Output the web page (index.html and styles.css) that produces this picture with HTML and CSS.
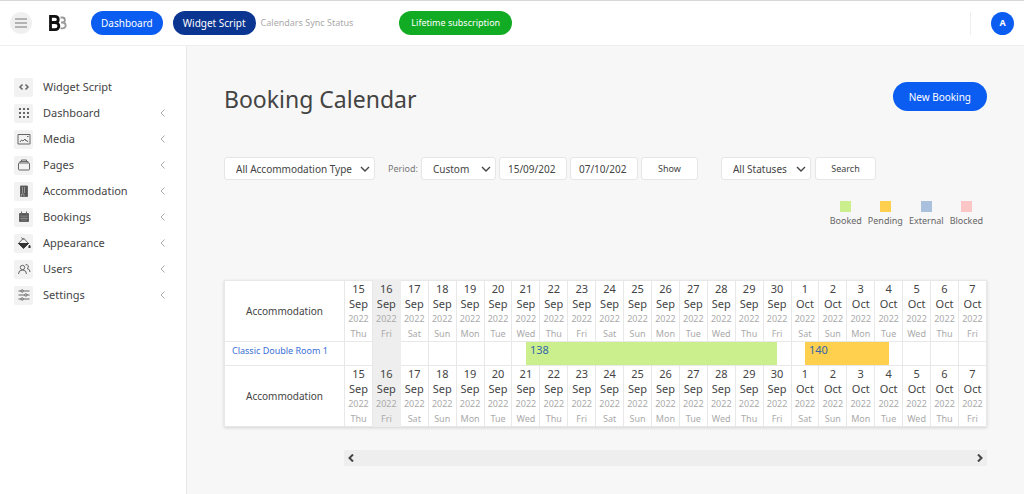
FILE: index.html
```html
<!DOCTYPE html>
<html lang="en">
<head>
<meta charset="utf-8">
<meta name="viewport" content="width=device-width, initial-scale=1">
<title>Booking Calendar</title>
<link rel="stylesheet" href="styles.css">
</head>
<body>
<header class="topbar">
  <button class="menu-toggle" type="button" aria-label="Toggle menu">
    <svg width="12" height="10" viewBox="0 0 12 10"><path d="M0 1h12M0 5h12M0 9h12" stroke="#777" stroke-width="1"/></svg>
  </button>
  <a class="logo" href="#" aria-label="Home">
    <svg width="20" height="18" viewBox="0 0 20 18" fill="none">
      <path d="M12.500 3.500h1.700c3.600 0 3.600 5 0 5H13h1.500c4.200 0 4.200 5.800 0 5.800h-2" stroke="#999" stroke-width="1.800"/>
      <path d="M2.500 2.300h4.300c4.600 0 4.600 6.200 0 6.200H2.500h4.600c5 0 5 7.200 0 7.200H2.500z" stroke="#111" stroke-width="2.800"/>
    </svg>
  </a>
  <nav class="top-links">
    <a class="pill" href="#">Dashboard</a>
    <a class="pill pill-navy" href="#">Widget Script</a>
    <a class="sync-link" href="#">Calendars Sync Status</a>
    <a class="pill pill-green" href="#">Lifetime subscription</a>
  </nav>
  <div class="account"><button class="avatar" type="button">A</button></div>
</header>
<div class="layout">
  <nav class="sidebar">
    <ul class="menu">
      <li><a class="menu-item" href="#"><span class="menu-icon"><svg width="14" height="14" viewBox="0 0 14 14"><path d="M5.500 4.500L3 7l2.500 2.500M8.500 4.500L11 7 8.500 9.500" stroke-width="1.500"/></svg></span><span>Widget Script</span></a></li>
      <li><a class="menu-item" href="#"><span class="menu-icon"><svg width="14" height="14" viewBox="0 0 14 14"><path d="M2 3h10M2 7h10M2 11h10" stroke-width="2" stroke-dasharray="2 2"/></svg></span><span>Dashboard</span><svg class="arrow" width="5" height="8" viewBox="0 0 5 8"><path d="M4.500.5L1 4l3.500 3.500"/></svg></a></li>
      <li><a class="menu-item" href="#"><span class="menu-icon"><svg width="14" height="14" viewBox="0 0 14 14"><path d="M1 2.500h12v9.500H1zM3 10l1.500-2 1.500 1 2-2 1 2 1-.5 1 1.500M10 4.500h1.500"/></svg></span><span>Media</span><svg class="arrow" width="5" height="8" viewBox="0 0 5 8"><path d="M4.500.5L1 4l3.500 3.500"/></svg></a></li>
      <li><a class="menu-item" href="#"><span class="menu-icon"><svg width="14" height="14" viewBox="0 0 14 14"><path d="M2 5h10q.5 0 .5.500V11q0 1-1 1h-9q-1 0-1-1V5.500Q1.500 5 2 5zM3 5V3.500h8V5M4.500 3.500V2h5v1.500"/></svg></span><span>Pages</span><svg class="arrow" width="5" height="8" viewBox="0 0 5 8"><path d="M4.500.5L1 4l3.500 3.500"/></svg></a></li>
      <li><a class="menu-item" href="#"><span class="menu-icon"><svg width="14" height="14" viewBox="0 0 14 14"><path d="M3.500 2h7v10.500h-7z" fill="#555"/><path d="M5.500 3v6M7.500 3v6M4.500 12.500V10H7v2.500" stroke="#aaa" stroke-width=".8"/></svg></span><span>Accommodation</span><svg class="arrow" width="5" height="8" viewBox="0 0 5 8"><path d="M4.500.5L1 4l3.500 3.500"/></svg></a></li>
      <li><a class="menu-item" href="#"><span class="menu-icon"><svg width="14" height="14" viewBox="0 0 14 14"><path d="M2.500 3.500h9v8h-9z" fill="#555"/><path d="M4.500 1.500v3M9.500 1.500v3"/><path d="M3 6h8M3 8.500h8M5 6v5M7 6v5M9 6v5" stroke="#999" stroke-width=".6"/></svg></span><span>Bookings</span><svg class="arrow" width="5" height="8" viewBox="0 0 5 8"><path d="M4.500.5L1 4l3.500 3.500"/></svg></a></li>
      <li><a class="menu-item" href="#"><span class="menu-icon"><svg width="14" height="14" viewBox="0 0 14 14"><path d="M1.500 7.500L6.500 2l5 5.500-5 4.500zM4.500 1.500L6.500 4"/><path d="M1.500 7.500h10l-5 4.800zM12.500 9q1.500 3 0 3t0-3z" fill="#333" stroke="#333"/></svg></span><span>Appearance</span><svg class="arrow" width="5" height="8" viewBox="0 0 5 8"><path d="M4.500.5L1 4l3.500 3.500"/></svg></a></li>
      <li><a class="menu-item" href="#"><span class="menu-icon"><svg width="14" height="14" viewBox="0 0 14 14"><circle cx="5.500" cy="5.500" r="2.200"/><path d="M1.500 12q0-4 4-4t4 4M8.500 2.800a2 2 0 1 1 1.500 3.700q3 .5 3 3.500"/></svg></span><span>Users</span><svg class="arrow" width="5" height="8" viewBox="0 0 5 8"><path d="M4.500.5L1 4l3.500 3.500"/></svg></a></li>
      <li><a class="menu-item" href="#"><span class="menu-icon"><svg width="14" height="14" viewBox="0 0 14 14"><path d="M1.500 3H4M6.500 3h6M1.500 7h6M10 7h2.500M1.500 11H4M6.500 11h6"/><circle cx="5.200" cy="3" r="1.200"/><circle cx="8.800" cy="7" r="1.200"/><circle cx="5.200" cy="11" r="1.200"/></svg></span><span>Settings</span><svg class="arrow" width="5" height="8" viewBox="0 0 5 8"><path d="M4.500.5L1 4l3.500 3.500"/></svg></a></li>
    </ul>
  </nav>
  <main class="content">
    <div class="page-head">
      <h1 class="title">Booking Calendar</h1>
      <button class="new-booking" type="button">New Booking</button>
    </div>
    <form class="filters">
      <span class="select-box type-box">
        <select class="field" aria-label="Accommodation type"><option>All Accommodation Types</option></select>
        <svg class="chevron" width="10" height="6" viewBox="0 0 10 6"><path d="M1 1l4 4 4-4"/></svg>
      </span>
      <label class="period-label" for="period">Period:</label>
      <span class="select-box period-box">
        <select class="field" id="period"><option>Custom</option></select>
        <svg class="chevron" width="10" height="6" viewBox="0 0 10 6"><path d="M1 1l4 4 4-4"/></svg>
      </span>
      <input class="field date" type="text" value="15/09/2022" aria-label="From">
      <input class="field date" type="text" value="07/10/2022" aria-label="To">
      <button class="field show" type="button">Show</button>
      <span class="select-box status-box">
        <select class="field" aria-label="Status"><option>All Statuses</option></select>
        <svg class="chevron" width="10" height="6" viewBox="0 0 10 6"><path d="M1 1l4 4 4-4"/></svg>
      </span>
      <button class="field search" type="button">Search</button>
    </form>
    <ul class="legend">
      <li><i class="swatch booked"></i>Booked</li>
      <li><i class="swatch pending"></i>Pending</li>
      <li><i class="swatch external"></i>External</li>
      <li><i class="swatch blocked"></i>Blocked</li>
    </ul>
    <table class="calendar">
      <thead>
        <tr>
          <th class="room-col">Accommodation</th>
          <th>15<b>Sep</b><small>2022</small><small>Thu</small></th>
          <th class="today">16<b>Sep</b><small>2022</small><small>Fri</small></th>
          <th>17<b>Sep</b><small>2022</small><small>Sat</small></th>
          <th>18<b>Sep</b><small>2022</small><small>Sun</small></th>
          <th>19<b>Sep</b><small>2022</small><small>Mon</small></th>
          <th>20<b>Sep</b><small>2022</small><small>Tue</small></th>
          <th>21<b>Sep</b><small>2022</small><small>Wed</small></th>
          <th>22<b>Sep</b><small>2022</small><small>Thu</small></th>
          <th>23<b>Sep</b><small>2022</small><small>Fri</small></th>
          <th>24<b>Sep</b><small>2022</small><small>Sat</small></th>
          <th>25<b>Sep</b><small>2022</small><small>Sun</small></th>
          <th>26<b>Sep</b><small>2022</small><small>Mon</small></th>
          <th>27<b>Sep</b><small>2022</small><small>Tue</small></th>
          <th>28<b>Sep</b><small>2022</small><small>Wed</small></th>
          <th>29<b>Sep</b><small>2022</small><small>Thu</small></th>
          <th>30<b>Sep</b><small>2022</small><small>Fri</small></th>
          <th>1<b>Oct</b><small>2022</small><small>Sat</small></th>
          <th>2<b>Oct</b><small>2022</small><small>Sun</small></th>
          <th>3<b>Oct</b><small>2022</small><small>Mon</small></th>
          <th>4<b>Oct</b><small>2022</small><small>Tue</small></th>
          <th>5<b>Oct</b><small>2022</small><small>Wed</small></th>
          <th>6<b>Oct</b><small>2022</small><small>Thu</small></th>
          <th>7<b>Oct</b><small>2022</small><small>Fri</small></th>
        </tr>
      </thead>
      <tbody>
        <tr>
          <td class="room"><a href="#">Classic Double Room 1</a></td>
          <td></td><td class="today"></td><td></td><td></td><td></td><td></td>
          <td><a class="stay booked nights-9" href="#">138</a></td>
          <td></td><td></td><td></td><td></td><td></td><td></td><td></td><td></td><td></td>
          <td><a class="stay pending nights-3" href="#">140</a></td>
          <td></td><td></td><td></td><td></td><td></td><td></td>
        </tr>
      </tbody>
      <tfoot>
        <tr>
          <th class="room-col">Accommodation</th>
          <th>15<b>Sep</b><small>2022</small><small>Thu</small></th>
          <th class="today">16<b>Sep</b><small>2022</small><small>Fri</small></th>
          <th>17<b>Sep</b><small>2022</small><small>Sat</small></th>
          <th>18<b>Sep</b><small>2022</small><small>Sun</small></th>
          <th>19<b>Sep</b><small>2022</small><small>Mon</small></th>
          <th>20<b>Sep</b><small>2022</small><small>Tue</small></th>
          <th>21<b>Sep</b><small>2022</small><small>Wed</small></th>
          <th>22<b>Sep</b><small>2022</small><small>Thu</small></th>
          <th>23<b>Sep</b><small>2022</small><small>Fri</small></th>
          <th>24<b>Sep</b><small>2022</small><small>Sat</small></th>
          <th>25<b>Sep</b><small>2022</small><small>Sun</small></th>
          <th>26<b>Sep</b><small>2022</small><small>Mon</small></th>
          <th>27<b>Sep</b><small>2022</small><small>Tue</small></th>
          <th>28<b>Sep</b><small>2022</small><small>Wed</small></th>
          <th>29<b>Sep</b><small>2022</small><small>Thu</small></th>
          <th>30<b>Sep</b><small>2022</small><small>Fri</small></th>
          <th>1<b>Oct</b><small>2022</small><small>Sat</small></th>
          <th>2<b>Oct</b><small>2022</small><small>Sun</small></th>
          <th>3<b>Oct</b><small>2022</small><small>Mon</small></th>
          <th>4<b>Oct</b><small>2022</small><small>Tue</small></th>
          <th>5<b>Oct</b><small>2022</small><small>Wed</small></th>
          <th>6<b>Oct</b><small>2022</small><small>Thu</small></th>
          <th>7<b>Oct</b><small>2022</small><small>Fri</small></th>
        </tr>
      </tfoot>
    </table>
    <div class="scroller">
      <button type="button" aria-label="Earlier dates"><svg width="6" height="8" viewBox="0 0 6 8"><path d="M5 .5L1.500 4 5 7.500"/></svg></button>
      <button type="button" aria-label="Later dates"><svg width="6" height="8" viewBox="0 0 6 8"><path d="M1 .5L4.500 4 1 7.500"/></svg></button>
    </div>
  </main>
</div>
</body>
</html>
```
FILE: styles.css
```css
* { box-sizing: border-box; }

body {
  margin: 0;
  min-height: 100vh;
  display: flex;
  flex-direction: column;
  background: #fff;
  color: #444;
  font: 11px/16px "Noto Sans", "Open Sans", sans-serif;
}

a { color: inherit; text-decoration: none; }
ul { list-style: none; margin: 0; padding: 0; }
button { border: 0; cursor: pointer; font: inherit; }
svg { display: block; flex: none; fill: none; }

.topbar {
  display: flex;
  align-items: center;
  height: 46px;
  padding: 0 10px;
  border-top: 1px solid #d8d8d8;
  border-bottom: 1px solid #eee;
}

.menu-toggle {
  display: grid;
  place-items: center;
  width: 22px;
  height: 22px;
  padding: 0;
  border-radius: 50%;
  background: #f0f0f0;
}

.logo { margin: 0 23px 0 16px; }
.top-links { display: flex; align-items: center; }

.pill {
  padding: 4px 10px;
  border-radius: 12px;
  background: #0b5cf0;
  color: #fff;
  font-size: 10px;
}

.pill-navy { margin-left: 10px; background: #0a3590; }
.sync-link { margin-left: 5px; color: #aaa; font-size: 9px; }
.pill-green { margin-left: 46px; padding: 4px 12px; background: #12ab24; font-size: 9px; }

.account {
  display: flex;
  margin-left: auto;
  padding-left: 20px;
  border-left: 1px solid #eee;
}

.avatar {
  width: 23px;
  height: 23px;
  padding: 0;
  border-radius: 50%;
  background: #0b5cf0;
  color: #fff;
  font-size: 9px;
  font-weight: 700;
}

.layout { display: flex; flex: 1; }

.sidebar {
  width: 187px;
  flex: none;
  padding: 28px 21px 0 14px;
  border-right: 1px solid #e8e8e8;
}

.menu-item { display: flex; align-items: center; height: 26px; }

.menu-icon {
  display: grid;
  place-items: center;
  width: 19px;
  height: 19px;
  margin-right: 10px;
  border-radius: 2px;
  background: #f2f2f2;
}

.menu-icon svg { stroke: #666; }
.arrow { margin-left: auto; stroke: #aaa; }

.content {
  flex: 1;
  min-width: 0;
  padding: 36px 37px 28px;
  background: #f7f7f7;
}

.page-head { display: flex; justify-content: space-between; }
.title { margin: 0; font-size: 23px; line-height: 34px; font-weight: 400; }

.new-booking {
  height: 29px;
  padding: 0 16px;
  border-radius: 15px;
  background: #0b5cf0;
  color: #fff;
  font-size: 10px;
}

.filters { display: flex; align-items: center; margin-top: 41px; }

.field {
  height: 23px;
  border: 1px solid #e6e6e6;
  border-radius: 3px;
  background: #fff;
  color: #444;
  font: 10px/16px "Noto Sans", "Open Sans", sans-serif;
}

.select-box { position: relative; }

.select-box .field {
  display: block;
  width: 100%;
  padding: 0 22px 0 11px;
  appearance: none;
}

.chevron {
  position: absolute;
  top: 9px;
  right: 5px;
  stroke: #444;
  stroke-width: 1.4;
  pointer-events: none;
}

.type-box { width: 151px; }
.period-label { margin: 0 3px 0 13px; color: #777; font-size: 9px; }
.period-box { width: 75px; }
.date { width: 68px; margin-left: 3px; padding: 0 10px 0 8px; }
.show { width: 57px; margin-left: 3px; font-size: 9px; }
.status-box { width: 90px; margin-left: 23px; }
.search { width: 61px; margin-left: 4px; font-size: 9px; }

.legend {
  display: flex;
  justify-content: flex-end;
  gap: 6px;
  margin: 21px 4px 0 0;
  font-size: 9px;
  line-height: 14px;
  color: #666;
}

.swatch { display: block; width: 11px; height: 11px; margin: 0 auto 2px; }
.booked { background: #ccef8e; }
.pending { background: #ffd04d; }
.external { background: #a9c1dd; }
.blocked { background: #fcc6c6; }

.calendar {
  width: 100%;
  margin-top: 52px;
  table-layout: fixed;
  border-collapse: collapse;
  background: #fff;
  box-shadow: 0 1px 3px rgba(0, 0, 0, .15);
}

.calendar th,
.calendar td {
  padding: 0;
  border: 1px solid #e8e8e8;
  font-weight: 400;
}

.calendar th { line-height: 15px; vertical-align: top; }
.calendar th.room-col { width: 120px; vertical-align: middle; font-size: 10px; }
.calendar b { display: block; font-weight: 400; }
.calendar small { display: block; color: #aaa; font-size: 9px; }
.calendar td { position: relative; height: 24px; }
.calendar .today { background: #eee; border-color: #eee; }

.calendar .room {
  padding-left: 7px;
  color: #3a70d6;
  font-size: 9px;
  line-height: 18px;
  vertical-align: top;
}

.stay {
  position: absolute;
  z-index: 1;
  top: 0;
  bottom: 0;
  left: 50%;
  padding-left: 4px;
  color: #3467a8;
  font-size: 11px;
  line-height: 15px;
}

/* One extra pixel per night covers the cell borders. */
.nights-9 { width: calc(900% + 9px); }
.nights-3 { width: calc(300% + 3px); }

.scroller {
  display: flex;
  justify-content: space-between;
  margin: 23px 0 0 120px;
  background: #eee;
}

.scroller button { padding: 4px; background: none; }
.scroller svg { stroke: #444; stroke-width: 2; }
```
